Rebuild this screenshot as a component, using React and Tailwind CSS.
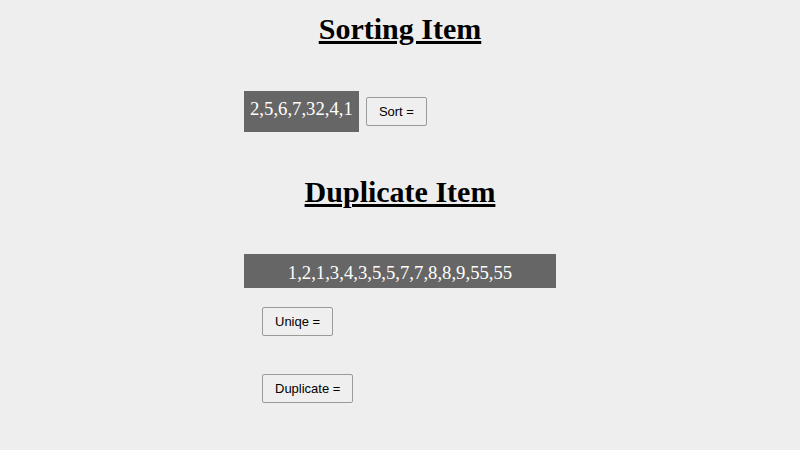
const serif = { fontFamily: '"Liberation Serif", "Times New Roman", serif' };

const Btn = ({ children, className = '' }) => (
  <button
    className={`h-[29px] px-[12px] bg-[#efefef] border border-[#9a9a9a] rounded-[2px] text-[13px] text-black font-['Liberation_Sans',Arial,sans-serif] ${className}`}
  >
    {children}
  </button>
);

export default function App() {
  return (
    <div className="min-h-screen w-full bg-[#eeeeee] text-black font-['Liberation_Serif','Times_New_Roman',serif] overflow-hidden">
      <div className="w-[312px] mx-auto flex flex-col">
        {/* Sorting */}
        <h1 className="mt-[12px] text-[30px] leading-[34px] font-bold underline text-center whitespace-nowrap" style={serif}>
          Sorting Item
        </h1>
        <div className="mt-[45px] flex items-center">
          <div className="bg-[#666666] text-white text-[18.72px] leading-[22px] px-[6px] pt-[7px] pb-[12px] whitespace-nowrap">
            2,5,6,7,32,4,1
          </div>
          <Btn className="ml-[7px]">Sort =</Btn>
        </div>

        {/* Duplicate */}
        <h2 className="mt-[43px] text-[30px] leading-[34px] font-bold underline text-center whitespace-nowrap" style={serif}>
          Duplicate Item
        </h2>
        <div className="mt-[45px] bg-[#666666] text-white text-[18.72px] leading-[22px] pt-[8px] pb-[4px] text-center whitespace-nowrap">
          1,2,1,3,4,3,5,5,7,7,8,8,9,55,55
        </div>
        <div className="mt-[19px] pl-[18px] flex">
          <Btn>Uniqe =</Btn>
        </div>
        <div className="mt-[38px] pl-[18px] flex">
          <Btn>Duplicate =</Btn>
        </div>
      </div>
    </div>
  );
}
